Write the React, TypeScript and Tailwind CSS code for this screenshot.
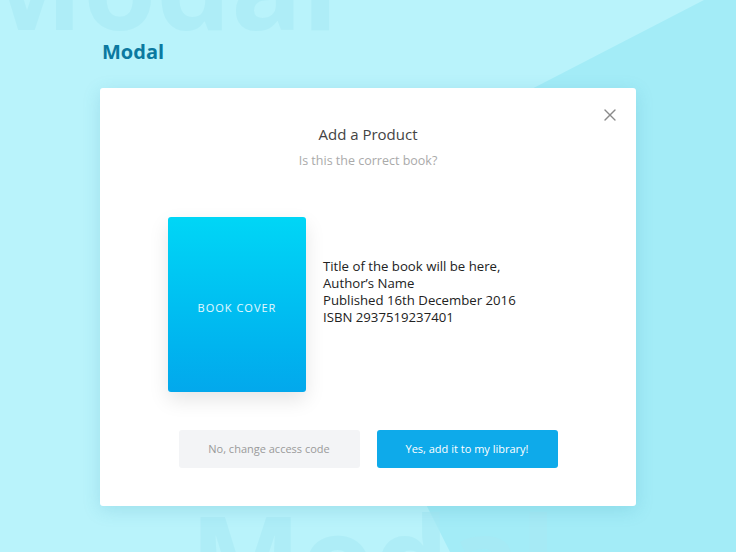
import React from "react";
import { X } from "lucide-react";

const book = {
  title: "Title of the book will be here,",
  author: "Author’s Name",
  published: "Published 16th December 2016",
  isbn: "ISBN 2937519237401",
};

const App: React.FC = () => {
  return (
    <div
      className="relative h-[552px] w-full overflow-hidden bg-[#b9f3fb]"
      style={{ fontFamily: '"Open Sans", "Noto Sans", sans-serif' }}
    >
      {/* background decoration: rotated square and watermark text */}
      <div
        className="pointer-events-none absolute inset-0 bg-[#a3ecf7]"
        style={{ clipPath: "polygon(704px 0, 736px 0, 736px 552px, 450px 552px, 282px 218px)" }}
      />
      <div className="pointer-events-none absolute left-[-28px] top-[-74px] select-none text-[118px] font-bold leading-none text-[#a8eaf5] opacity-60">
        Modal
      </div>
      <div className="pointer-events-none absolute left-[190px] top-[498px] select-none text-[118px] font-bold leading-none text-[#a8eaf5] opacity-60">
        Modal
      </div>

      <div className="relative flex flex-col pl-[100px] pt-[38px]">
        <h1 className="pl-[2px] text-[20px] font-bold leading-[28px] text-[#0b79a0]">Modal</h1>

        <div className="relative mt-[22px] h-[418px] w-[536px] rounded-[3px] bg-white shadow-[0_4px_18px_rgba(40,140,170,0.18)]">
          <button className="absolute right-[16px] top-[17px] text-[#8a8a8a]">
            <X size={20} strokeWidth={1.6} />
          </button>

          <div className="flex flex-col items-center pt-[36px]">
            <h2 className="text-[15px] leading-[20px] text-[#444]">Add a Product</h2>
            <p className="mt-[8px] text-[12.5px] leading-[18px] text-[#aaa]">Is this the correct book?</p>
          </div>

          <div className="mt-[47px] flex items-start pl-[68px]">
            <div className="flex h-[175px] w-[138px] items-center justify-center rounded-[3px] bg-gradient-to-b from-[#00d6f6] to-[#03a8ec] pt-[8px] shadow-[0_8px_20px_rgba(0,0,0,0.10)]">
              <span className="text-[11px] tracking-[1px] text-white/90">BOOK COVER</span>
            </div>
            <div className="ml-[17px] mt-[41px] flex flex-col text-[13.2px] leading-[17px] text-[#222]">
              <span>{book.title}</span>
              <span>{book.author}</span>
              <span>{book.published}</span>
              <span>{book.isbn}</span>
            </div>
          </div>

          <div className="mt-[38px] flex justify-center gap-[17px]">
            <button className="h-[38px] w-[181px] rounded-[3px] bg-[#f3f4f6] text-[11px] text-[#9a9a9a]">
              No, change access code
            </button>
            <button className="h-[38px] w-[181px] rounded-[3px] bg-[#0eaaea] text-[11px] text-white">
              Yes, add it to my library!
            </button>
          </div>
        </div>
      </div>
    </div>
  );
};

export default App;
